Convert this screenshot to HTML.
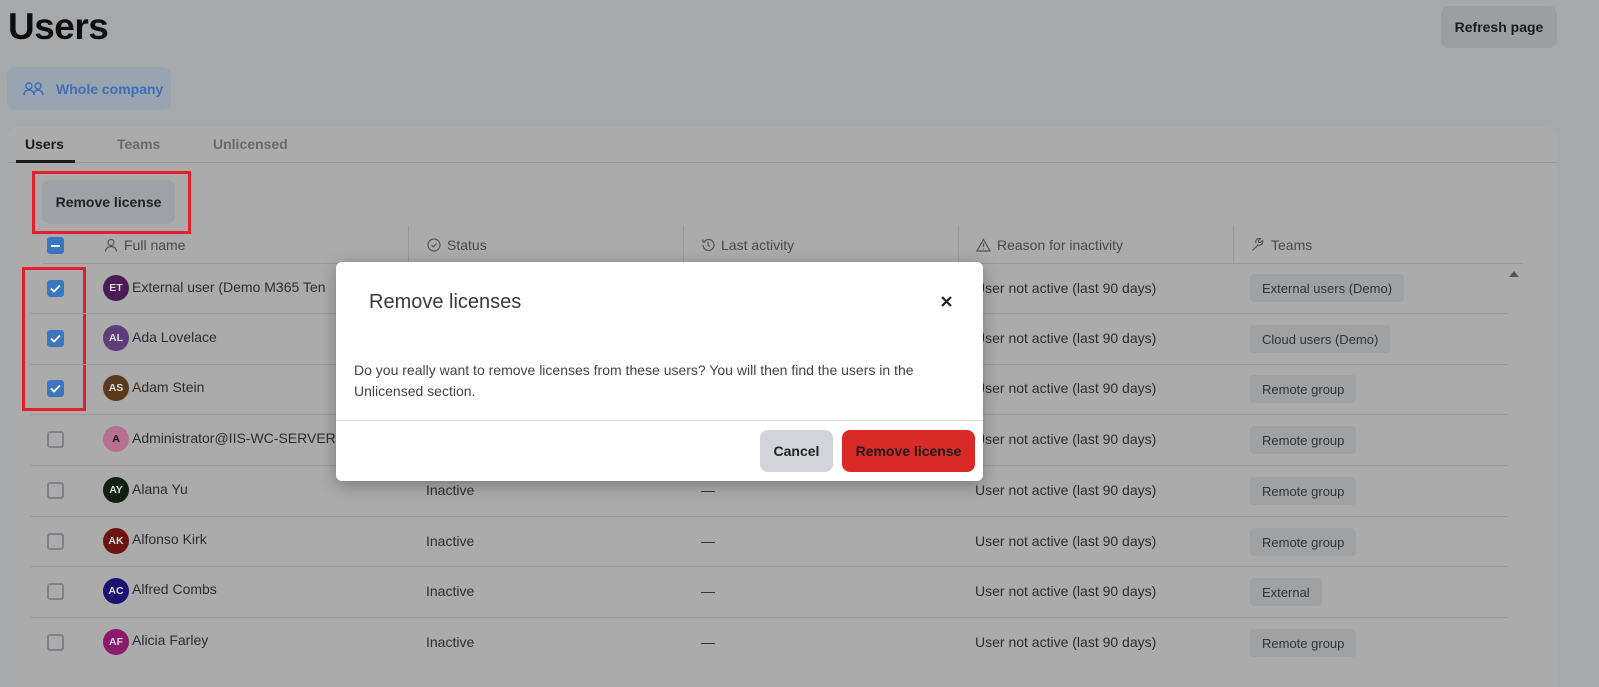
<!DOCTYPE html>
<html><head><meta charset="utf-8"><style>
*{box-sizing:border-box;margin:0;padding:0}
body{width:1599px;height:678px;overflow:hidden;background:#a7a8aa;font-family:"Liberation Sans",sans-serif;position:relative;color:#2a2a2a}
.abs{position:absolute}
h1{position:absolute;left:8px;top:6px;font-size:37px;font-weight:700;color:#0d0d0d;letter-spacing:-0.5px}
.refresh{left:1441px;top:6px;width:116px;height:42px;border-radius:8px;background:#9c9ea1;font-size:14px;font-weight:700;color:#1a1a1a;display:flex;align-items:center;justify-content:center}
.whole{left:7px;top:67px;width:164px;height:43px;border-radius:8px;background:#98a4b0;color:#3e6fb8;font-size:14px;font-weight:700;display:flex;align-items:center;padding-left:16px;gap:11px}
.card{left:8px;top:127px;width:1549px;height:560px;background:#ababab;border-radius:8px 8px 0 0}
.tab{top:136px;font-size:14px;font-weight:700;color:#6a6a6a}
.line{background:#999a9c;height:1px}
.rl{left:42px;top:180px;width:133px;height:44px;border-radius:8px;background:#9ea1a5;font-size:14px;font-weight:700;color:#222;display:flex;align-items:center;justify-content:center}
.red{border:3px solid #e0202a}
.hdr{top:237px;font-size:14px;color:#4a4a4a;display:flex;align-items:center;gap:6px}
.cb{width:17px;height:17px;border-radius:3px;border:2px solid #7f8185;left:47px}
.cbx{background:#3a77c0;border-color:#3a77c0}
.av{width:26px;height:26px;border-radius:50%;left:103px;color:#ddd;font-size:10.5px;font-weight:700;display:flex;align-items:center;justify-content:center}
.nm{left:132px;font-size:14px;color:#2d2d2d}
.tx{font-size:14px;color:#2d2d2d}
.tag{left:1250px;height:28px;border-radius:4px;background:#a0a1a3;font-size:13px;color:#333;display:flex;align-items:center;padding:0 12px}
.modal{left:336px;top:262px;width:647px;height:219px;background:#fff;border-radius:6px;box-shadow:0 4px 16px rgba(0,0,0,.3)}
</style></head><body>
<h1>Users</h1>
<div class="abs refresh">Refresh page</div>
<div class="abs whole"><svg width="22" height="14" viewBox="0 0 22 14" fill="none" stroke="#3e6fb8" stroke-width="1.4"><circle cx="6" cy="4" r="3"/><path d="M1 13c0-3 2-5 5-5s5 2 5 5"/><circle cx="15" cy="4" r="3"/><path d="M11 13c0-3 2-5 4-5s5 2 5 5"/></svg>Whole company</div>
<div class="abs card"></div>
<div class="abs tab" style="left:25px;color:#1c1c1c">Users</div>
<div class="abs tab" style="left:117px">Teams</div>
<div class="abs tab" style="left:213px">Unlicensed</div>
<div class="abs line" style="left:8px;top:162px;width:1549px"></div>
<div class="abs" style="left:16px;top:160px;width:59px;height:3px;background:#1c1c1c"></div>
<div class="abs red" style="left:32px;top:171px;width:159px;height:63px"></div>
<div class="abs rl">Remove license</div>
<div class="abs red" style="left:22px;top:267px;width:64px;height:144px"></div>
<div class="abs cb cbx" style="top:237px"><div style="position:absolute;left:2px;top:5.5px;width:9px;height:2px;background:#fff"></div></div>
<div class="abs hdr" style="left:104px"><svg width="14" height="14" viewBox="0 0 14 14" fill="none" stroke="#555" stroke-width="1.2"><circle cx="7" cy="4.5" r="3"/><path d="M1.5 13.5c0-3 2.5-5 5.5-5s5.5 2 5.5 5"/></svg>Full name</div>
<div class="abs hdr" style="left:427px"><svg width="14" height="14" viewBox="0 0 14 14" fill="none" stroke="#555" stroke-width="1.2"><circle cx="7" cy="7" r="6"/><path d="M4.5 7l2 2 3-3.5"/></svg>Status</div>
<div class="abs hdr" style="left:701px"><svg width="14" height="14" viewBox="0 0 14 14" fill="none" stroke="#555" stroke-width="1.2"><path d="M2 7a5.5 5.5 0 1 0 1.5-3.8"/><path d="M2 1.5v2.5h2.5M7 4v3.2l2 1.3"/></svg>Last activity</div>
<div class="abs hdr" style="left:976px"><svg width="15" height="14" viewBox="0 0 15 14" fill="none" stroke="#555" stroke-width="1.2"><path d="M7.5 1.5l6.5 11.5h-13z"/><path d="M7.5 5.5v3.5M7.5 10.5v1"/></svg>Reason for inactivity</div>
<div class="abs hdr" style="left:1251px"><svg width="14" height="14" viewBox="0 0 14 14" fill="none" stroke="#555" stroke-width="1.2"><path d="M1.5 12.5l5.5-5.5a3.5 3.5 0 0 0 4.5-4.5l-2 2-1.8-.2-.2-1.8 2-2a3.5 3.5 0 0 0-4.5 4.5"/></svg>Teams</div>
<div class="abs" style="left:408px;top:226px;width:1px;height:37px;background:#9a9a9a"></div>
<div class="abs" style="left:683px;top:226px;width:1px;height:37px;background:#9a9a9a"></div>
<div class="abs" style="left:958px;top:226px;width:1px;height:37px;background:#9a9a9a"></div>
<div class="abs" style="left:1233px;top:226px;width:1px;height:37px;background:#9a9a9a"></div>
<div class="abs line" style="left:43px;top:263px;width:1480px"></div>
<div class="abs" style="left:1509px;top:271px;width:0;height:0;border-left:5px solid transparent;border-right:5px solid transparent;border-bottom:6px solid #555"></div>

<div class="abs line" style="left:30px;top:313px;width:1478px"></div>
<div class="abs line" style="left:30px;top:364px;width:1478px"></div>
<div class="abs line" style="left:30px;top:414px;width:1478px"></div>
<div class="abs line" style="left:30px;top:465px;width:1478px"></div>
<div class="abs line" style="left:30px;top:516px;width:1478px"></div>
<div class="abs line" style="left:30px;top:566px;width:1478px"></div>
<div class="abs line" style="left:30px;top:617px;width:1478px"></div>

<div class="abs cb cbx" style="top:280px"><svg class="abs" style="left:1px;top:2px" width="11" height="9" viewBox="0 0 11 9" fill="none" stroke="#fff" stroke-width="1.8"><path d="M1 4.5l3 3 6-6"/></svg></div>
<div class="abs cb cbx" style="top:330px"><svg class="abs" style="left:1px;top:2px" width="11" height="9" viewBox="0 0 11 9" fill="none" stroke="#fff" stroke-width="1.8"><path d="M1 4.5l3 3 6-6"/></svg></div>
<div class="abs cb cbx" style="top:380px"><svg class="abs" style="left:1px;top:2px" width="11" height="9" viewBox="0 0 11 9" fill="none" stroke="#fff" stroke-width="1.8"><path d="M1 4.5l3 3 6-6"/></svg></div>
<div class="abs cb" style="top:431px"></div>
<div class="abs cb" style="top:482px"></div>
<div class="abs cb" style="top:533px"></div>
<div class="abs cb" style="top:583px"></div>
<div class="abs cb" style="top:634px"></div>

<div class="abs av" style="top:275px;background:#4a1b55">ET</div><div class="abs nm" style="top:279px">External user (Demo M365 Ten</div>
<div class="abs av" style="top:325px;background:#5f3c7a">AL</div><div class="abs nm" style="top:329px">Ada Lovelace</div>
<div class="abs av" style="top:375px;background:#5a3a1c">AS</div><div class="abs nm" style="top:379px">Adam Stein</div>
<div class="abs av" style="top:426px;background:#b5708f;color:#111">A</div><div class="abs nm" style="top:430px">Administrator@IIS-WC-SERVER</div>
<div class="abs av" style="top:477px;background:#0f2210">AY</div><div class="abs nm" style="top:481px">Alana Yu</div>
<div class="abs av" style="top:528px;background:#6b1410">AK</div><div class="abs nm" style="top:531px">Alfonso Kirk</div>
<div class="abs av" style="top:578px;background:#1a1170">AC</div><div class="abs nm" style="top:581px">Alfred Combs</div>
<div class="abs av" style="top:629px;background:#8c1a6c">AF</div><div class="abs nm" style="top:632px">Alicia Farley</div>

<div class="abs tx" style="left:426px;top:482px">Inactive</div><div class="abs tx" style="left:701px;top:482px">—</div>
<div class="abs tx" style="left:426px;top:533px">Inactive</div><div class="abs tx" style="left:701px;top:533px">—</div>
<div class="abs tx" style="left:426px;top:583px">Inactive</div><div class="abs tx" style="left:701px;top:583px">—</div>
<div class="abs tx" style="left:426px;top:634px">Inactive</div><div class="abs tx" style="left:701px;top:634px">—</div>

<div class="abs tx" style="left:975px;top:280px">User not active (last 90 days)</div>
<div class="abs tx" style="left:975px;top:330px">User not active (last 90 days)</div>
<div class="abs tx" style="left:975px;top:380px">User not active (last 90 days)</div>
<div class="abs tx" style="left:975px;top:431px">User not active (last 90 days)</div>
<div class="abs tx" style="left:975px;top:482px">User not active (last 90 days)</div>
<div class="abs tx" style="left:975px;top:533px">User not active (last 90 days)</div>
<div class="abs tx" style="left:975px;top:583px">User not active (last 90 days)</div>
<div class="abs tx" style="left:975px;top:634px">User not active (last 90 days)</div>

<div class="abs tag" style="top:274px">External users (Demo)</div>
<div class="abs tag" style="top:325px">Cloud users (Demo)</div>
<div class="abs tag" style="top:375px">Remote group</div>
<div class="abs tag" style="top:426px">Remote group</div>
<div class="abs tag" style="top:477px">Remote group</div>
<div class="abs tag" style="top:528px">Remote group</div>
<div class="abs tag" style="top:578px">External</div>
<div class="abs tag" style="top:629px">Remote group</div>

<div class="abs modal">
 <div class="abs" style="left:33px;top:29px;font-size:20px;color:#3a3a3a">Remove licenses</div>
 <svg class="abs" style="left:605px;top:34px" width="11" height="11" viewBox="0 0 11 11" stroke="#222" stroke-width="2.2"><path d="M1 1l9 9M10 1l-9 9"/></svg>
 <div class="abs" style="left:18px;top:98px;width:605px;font-size:14px;line-height:21px;color:#444">Do you really want to remove licenses from these users? You will then find the users in the Unlicensed section.</div>
 <div class="abs" style="left:0;top:158px;width:647px;height:1px;background:#ddd"></div>
 <div class="abs" style="left:424px;top:168px;width:73px;height:42px;border-radius:8px;background:#d1d4d8;font-size:14px;font-weight:700;color:#222;display:flex;align-items:center;justify-content:center">Cancel</div>
 <div class="abs" style="left:506px;top:168px;width:133px;height:42px;border-radius:8px;background:#da2a28;font-size:14px;font-weight:700;color:#1a1a1a;display:flex;align-items:center;justify-content:center">Remove license</div>
</div>
</body></html>
